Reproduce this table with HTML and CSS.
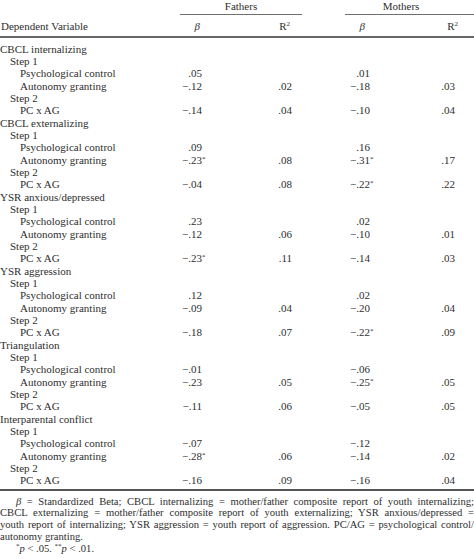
FILE: index.html
```html
<!DOCTYPE html>
<html>
<head>
<meta charset="utf-8">
<link rel="stylesheet" href="styles.css">
</head>
<body>
<div class="page">
  <div class="groups">
    <div class="grp fathers">Fathers</div>
    <div class="grp mothers">Mothers</div>
  </div>
  <div class="row head">
    <div class="lab">Dependent Variable</div>
    <div class="h1"><i>β</i></div>
    <div class="h2">R<sup>2</sup></div>
    <div class="h3"><i>β</i></div>
    <div class="h4">R<sup>2</sup></div>
  </div>
  <div class="body">
    <div class="row"><div class="lab">CBCL internalizing</div></div>
    <div class="row"><div class="lab l1">Step 1</div></div>
    <div class="row"><div class="lab l2">Psychological control</div><div>.05</div><div></div><div>.01</div><div></div></div>
    <div class="row"><div class="lab l2">Autonomy granting</div><div>−.12</div><div>.02</div><div>−.18</div><div>.03</div></div>
    <div class="row"><div class="lab l1">Step 2</div></div>
    <div class="row"><div class="lab l2">PC x AG</div><div>−.14</div><div>.04</div><div>−.10</div><div>.04</div></div>

    <div class="row"><div class="lab">CBCL externalizing</div></div>
    <div class="row"><div class="lab l1">Step 1</div></div>
    <div class="row"><div class="lab l2">Psychological control</div><div>.09</div><div></div><div>.16</div><div></div></div>
    <div class="row"><div class="lab l2">Autonomy granting</div><div>−.23<span class="sig">*</span></div><div>.08</div><div>−.31<span class="sig">*</span></div><div>.17</div></div>
    <div class="row"><div class="lab l1">Step 2</div></div>
    <div class="row"><div class="lab l2">PC x AG</div><div>−.04</div><div>.08</div><div>−.22<span class="sig">*</span></div><div>.22</div></div>

    <div class="row"><div class="lab">YSR anxious/depressed</div></div>
    <div class="row"><div class="lab l1">Step 1</div></div>
    <div class="row"><div class="lab l2">Psychological control</div><div>.23</div><div></div><div>.02</div><div></div></div>
    <div class="row"><div class="lab l2">Autonomy granting</div><div>−.12</div><div>.06</div><div>−.10</div><div>.01</div></div>
    <div class="row"><div class="lab l1">Step 2</div></div>
    <div class="row"><div class="lab l2">PC x AG</div><div>−.23<span class="sig">*</span></div><div>.11</div><div>−.14</div><div>.03</div></div>

    <div class="row"><div class="lab">YSR aggression</div></div>
    <div class="row"><div class="lab l1">Step 1</div></div>
    <div class="row"><div class="lab l2">Psychological control</div><div>.12</div><div></div><div>.02</div><div></div></div>
    <div class="row"><div class="lab l2">Autonomy granting</div><div>−.09</div><div>.04</div><div>−.20</div><div>.04</div></div>
    <div class="row"><div class="lab l1">Step 2</div></div>
    <div class="row"><div class="lab l2">PC x AG</div><div>−.18</div><div>.07</div><div>−.22<span class="sig">*</span></div><div>.09</div></div>

    <div class="row"><div class="lab">Triangulation</div></div>
    <div class="row"><div class="lab l1">Step 1</div></div>
    <div class="row"><div class="lab l2">Psychological control</div><div>−.01</div><div></div><div>−.06</div><div></div></div>
    <div class="row"><div class="lab l2">Autonomy granting</div><div>−.23</div><div>.05</div><div>−.25<span class="sig">*</span></div><div>.05</div></div>
    <div class="row"><div class="lab l1">Step 2</div></div>
    <div class="row"><div class="lab l2">PC x AG</div><div>−.11</div><div>.06</div><div>−.05</div><div>.05</div></div>

    <div class="row"><div class="lab">Interparental conflict</div></div>
    <div class="row"><div class="lab l1">Step 1</div></div>
    <div class="row"><div class="lab l2">Psychological control</div><div>−.07</div><div></div><div>−.12</div><div></div></div>
    <div class="row"><div class="lab l2">Autonomy granting</div><div>−.28<span class="sig">*</span></div><div>.06</div><div>−.14</div><div>.02</div></div>
    <div class="row"><div class="lab l1">Step 2</div></div>
    <div class="row"><div class="lab l2">PC x AG</div><div>−.16</div><div>.09</div><div>−.16</div><div>.04</div></div>
  </div>
  <div class="notes">
    <div class="nl first"><i>β</i> = Standardized Beta; CBCL internalizing = mother/father composite report of youth internalizing;</div>
    <div class="nl">CBCL externalizing = mother/father composite report of youth externalizing; YSR anxious/depressed =</div>
    <div class="nl">youth report of internalizing; YSR aggression = youth report of aggression. PC/AG = psychological control/</div>
    <div class="nl last">autonomy granting.</div>
    <div class="nl last first"><sup class="ast">*</sup><i>p</i> &lt; .05. <sup class="ast">**</sup><i>p</i> &lt; .01.</div>
  </div>
</div>
</body>
</html>
```
FILE: styles.css
```css
html, body {
  margin: 0;
  padding: 0;
  background: #ffffff;
}
.page {
  width: 474px;
  font-family: "Liberation Serif", "Times New Roman", serif;
  font-size: 11px;
  color: #2e2e2e;
}
.groups {
  display: flex;
  padding-left: 180px;
  height: 14px;
}
.grp {
  height: 14px;
  line-height: 12px;
  text-align: center;
  border-bottom: 1px solid #707070;
  box-sizing: content-box;
}
.fathers {
  width: 122px;
}
.mothers {
  margin-left: 43px;
  width: 112px;
  padding-right: 17px;
}
.row {
  display: grid;
  grid-template-columns: 150px 52px 90px 78px 85px;
  height: 12.34px;
  line-height: 12.34px;
  white-space: nowrap;
}
.row > div {
  text-align: right;
}
.row > .lab {
  text-align: left;
}
.head {
  height: 21px;
  line-height: 12px;
  padding-top: 5px;
  padding-bottom: 4px;
  border-bottom: 2px solid #666666;
  box-sizing: border-box;
  height: 38px;
  margin-top: 0;
}
.head {
  height: auto;
  padding-top: 6px;
}
.head sup, .notes sup {
  font-size: 7px;
  line-height: 0;
  vertical-align: 4px;
}
.head .lab {
  padding-left: 1px;
}
.h1 { padding-right: 2px; }
.h2 { padding-right: 2px; }
.h3 { padding-right: 5px; }
.h4 { margin-right: -3px; }
.body {
  padding-top: 4.8px;
  padding-bottom: 2px;
  border-bottom: 2px solid #555555;
}
.lab.l1 { padding-left: 10px; }
.lab.l2 { padding-left: 20px; }
.sig {
  display: inline-block;
  width: 0;
  font-size: 7px;
  vertical-align: 3px;
  line-height: 0;
  text-align: left;
}
.notes {
  padding-top: 5px;
  font-size: 10.6px;
  line-height: 11.8px;
}
.nl {
  text-align: justify;
  text-align-last: justify;
  white-space: nowrap;
}
.nl.last {
  text-align-last: left;
}
.nl.first {
  padding-left: 16px;
}
.ast {
  font-size: 7px;
}
```
